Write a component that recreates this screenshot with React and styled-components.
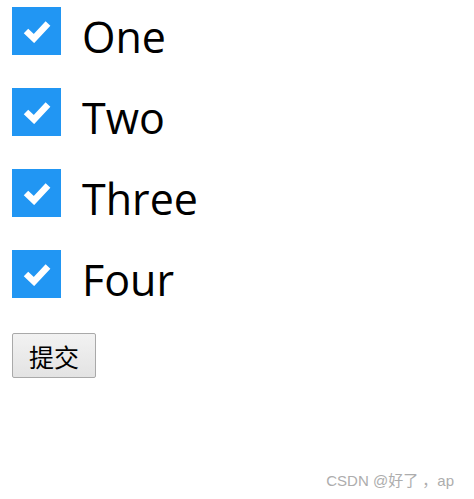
import React, { useState } from "react";
import styled, { createGlobalStyle } from "styled-components";

const GlobalStyle = createGlobalStyle`
  html, body {
    margin: 0;
    padding: 0;
    background: #ffffff;
  }
  body {
    font-family: "Open Sans", "Noto Sans", sans-serif;
  }
`;

const Page = styled.div`
  position: relative;
  width: 474px;
  height: 499px;
  padding: 7px 0 0 12px;
  box-sizing: border-box;
`;

const Form = styled.form`
  display: flex;
  flex-direction: column;
  align-items: flex-start;
`;

const Row = styled.label`
  display: flex;
  align-items: center;
  height: 48px;
  margin-bottom: 33px;
  cursor: pointer;
`;

const Box = styled.span`
  width: 49px;
  height: 48px;
  flex: none;
  display: flex;
  align-items: center;
  justify-content: center;
  background: ${(p) => (p.checked ? "#2196f3" : "#ffffff")};
  border: ${(p) => (p.checked ? "none" : "2px solid #2196f3")};
  box-sizing: border-box;
`;

const Hidden = styled.input`
  display: none;
`;

const Text = styled.span`
  margin-left: 21px;
  font-size: 43px;
  color: #000000;
  line-height: 48px;
  padding-top: 12px;
`;

const Submit = styled.button`
  width: 84px;
  height: 45px;
  margin-top: 2px;
  padding: 0;
  font-family: "Noto Sans CJK SC", sans-serif;
  font-size: 25px;
  color: #000000;
  background: linear-gradient(#f2f2f2, #e3e3e3);
  border: 1px solid #a9a9a9;
  border-radius: 2px;
`;

const Watermark = styled.div`
  position: absolute;
  right: 20px;
  bottom: 9px;
  font-family: "Liberation Sans", "Noto Sans CJK SC", sans-serif;
  font-size: 15px;
  color: #adadad;
`;

const Check = () => (
  <svg width="30" height="24" viewBox="0 0 30 24">
    <path
      d="M4 12 L12 19.5 L26 4.5"
      fill="none"
      stroke="#ffffff"
      strokeWidth="6.5"
      strokeLinecap="butt"
      strokeLinejoin="miter"
    />
  </svg>
);

const items = ["One", "Two", "Three", "Four"];

export default function App() {
  const [checked, setChecked] = useState(items.map(() => true));

  const toggle = (i) =>
    setChecked((c) => c.map((v, j) => (j === i ? !v : v)));

  return (
    <Page>
      <GlobalStyle />
      <Form onSubmit={(e) => e.preventDefault()}>
        {items.map((name, i) => (
          <Row key={name}>
            <Hidden
              type="checkbox"
              checked={checked[i]}
              onChange={() => toggle(i)}
            />
            <Box checked={checked[i]}>{checked[i] && <Check />}</Box>
            <Text>{name}</Text>
          </Row>
        ))}
        <Submit type="submit">提交</Submit>
      </Form>
      <Watermark>CSDN @好了 ，ap</Watermark>
    </Page>
  );
}
